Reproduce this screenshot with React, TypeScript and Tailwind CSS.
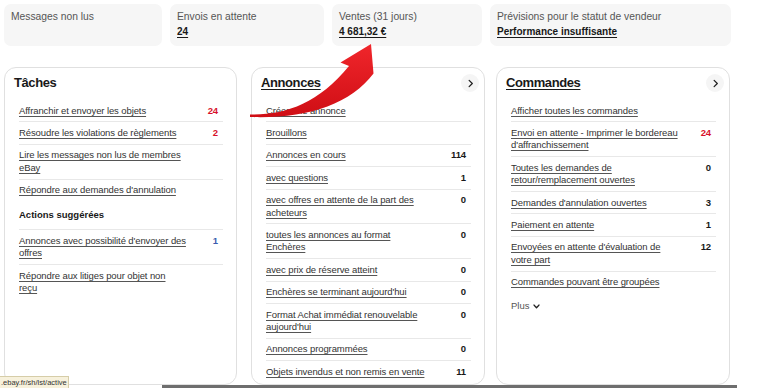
import React from "react";

type Row = { lines: string[]; n?: string; color?: "red" | "blue"; noBorder?: boolean; header?: boolean };

const tasks: Row[] = [
  { lines: ["Affranchir et envoyer les objets"], n: "24", color: "red" },
  { lines: ["Résoudre les violations de règlements"], n: "2", color: "red" },
  { lines: ["Lire les messages non lus de membres", "eBay"] },
  { lines: ["Répondre aux demandes d'annulation"], noBorder: true },
  { lines: ["Actions suggérées"], header: true },
  { lines: ["Annonces avec possibilité d'envoyer des", "offres"], n: "1", color: "blue" },
  { lines: ["Répondre aux litiges pour objet non", "reçu"], noBorder: true },
];

const listings: Row[] = [
  { lines: ["Créer une annonce"] },
  { lines: ["Brouillons"] },
  { lines: ["Annonces en cours"], n: "114" },
  { lines: ["avec questions"], n: "1" },
  { lines: ["avec offres en attente de la part des", "acheteurs"], n: "0" },
  { lines: ["toutes les annonces au format", "Enchères"], n: "0" },
  { lines: ["avec prix de réserve atteint"], n: "0" },
  { lines: ["Enchères se terminant aujourd'hui"], n: "0" },
  { lines: ["Format Achat immédiat renouvelable", "aujourd'hui"], n: "0" },
  { lines: ["Annonces programmées"], n: "0" },
  { lines: ["Objets invendus et non remis en vente"], n: "11", noBorder: true },
];

const orders: Row[] = [
  { lines: ["Afficher toutes les commandes"] },
  { lines: ["Envoi en attente - Imprimer le bordereau", "d'affranchissement"], n: "24", color: "red" },
  { lines: ["Toutes les demandes de", "retour/remplacement ouvertes"], n: "0" },
  { lines: ["Demandes d'annulation ouvertes"], n: "3" },
  { lines: ["Paiement en attente"], n: "1" },
  { lines: ["Envoyées en attente d'évaluation de", "votre part"], n: "12" },
  { lines: ["Commandes pouvant être groupées"], noBorder: true },
];

function Stat({ w, label, value }: { w: string; label: string; value?: string }) {
  return (
    <div className={`${w} h-[42px] shrink-0 rounded-[7px] bg-[#f6f6f6] pl-[7px] pt-[6px]`}>
      <div className="text-[10.3px] leading-[14px] text-[#555]">{label}</div>
      {value && (
        <div className="text-[10px] leading-[15px] font-bold text-[#191919] underline underline-offset-[1.5px]">
          {value}
        </div>
      )}
    </div>
  );
}

function Chevron() {
  return (
    <div className="flex h-[18px] w-[18px] items-center justify-center rounded-full bg-[#f5f5f5]">
      <svg width="9" height="9" viewBox="0 0 10 10" fill="none">
        <path d="M3.5 1.5 L7 5 L3.5 8.5" stroke="#1f1f1f" strokeWidth="1.4" strokeLinecap="round" strokeLinejoin="round" />
      </svg>
    </div>
  );
}

function List({ rows }: { rows: Row[] }) {
  return (
    <div className="ml-[14px] mr-[13px]">
      {rows.map((r, i) =>
        r.header ? (
          <div key={i} className="border-b border-[#e8e8e8] py-[8px] text-[9.5px] leading-[12.4px] font-bold text-[#191919]">
            {r.lines[0]}
          </div>
        ) : (
          <div
            key={i}
            className={`flex justify-between py-[4.5px] text-[9.5px] leading-[12.4px] tracking-[-0.1px] ${
              r.noBorder ? "" : "border-b border-[#e8e8e8]"
            }`}
          >
            <span className="whitespace-nowrap text-[#333] underline underline-offset-[1.5px] decoration-[#555]">
              {r.lines.map((l, j) => (
                <React.Fragment key={j}>
                  {j > 0 && <br />}
                  {l}
                </React.Fragment>
              ))}
            </span>
            {r.n && (
              <span
                className={`pr-[5px] font-bold ${
                  r.color === "red" ? "text-[#d8102a]" : r.color === "blue" ? "text-[#3b5cae]" : "text-[#191919]"
                }`}
              >
                {r.n}
              </span>
            )}
          </div>
        )
      )}
    </div>
  );
}

function Panel({ w, ml, title, link, chevron, rows, children }: { w: string; ml: string; title: string; link?: boolean; chevron?: boolean; rows: Row[]; children?: React.ReactNode }) {
  return (
    <div className={`${w} ${ml} h-full shrink-0 rounded-[12px] border border-[#e0e0e0] bg-white`}>
      <div className="flex h-[32px] items-start justify-between pl-[9px] pr-[5px] pt-[7px]">
        <span
          className={`text-[13px] leading-[15px] font-bold tracking-[-0.4px] text-[#191919] ${
            link ? "underline underline-offset-[2px]" : ""
          }`}
        >
          {title}
        </span>
        {chevron && <div className="-mt-[1px]"><Chevron /></div>}
      </div>
      <List rows={rows} />
      {children}
    </div>
  );
}

export default function App() {
  return (
    <div className="relative h-[388px] w-[760px] overflow-hidden bg-white font-['Liberation_Sans',Arial,sans-serif] text-[#333]">
      <div className="flex gap-2 pl-1 pt-1">
        <Stat w="w-[158px]" label="Messages non lus" />
        <Stat w="w-[154px]" label="Envois en attente" value="24" />
        <Stat w="w-[150px]" label="Ventes (31 jours)" value="4 681,32 €" />
        <Stat w="w-[241px]" label="Prévisions pour le statut de vendeur" value="Performance insuffisante" />
      </div>

      <div className="mt-[21px] flex h-[318px] pl-1">
        <Panel w="w-[233px]" ml="ml-0" title="Tâches" rows={tasks} />
        <Panel w="w-[234px]" ml="ml-[14px]" title="Annonces" link chevron rows={listings} />
        <Panel w="w-[234px]" ml="ml-[11px]" title="Commandes" link chevron rows={orders}>
          <div className="ml-[14px] mt-[7px] flex items-center gap-[4px] text-[9.5px] leading-[12px] text-[#555]">
            Plus
            <svg width="7" height="7" viewBox="0 0 10 10" fill="none">
              <path d="M1.5 3 L5 6.8 L8.5 3" stroke="#222" strokeWidth="2" strokeLinecap="round" strokeLinejoin="round" />
            </svg>
          </div>
        </Panel>
      </div>

      {/* red arrow overlay */}
      <svg className="pointer-events-none absolute inset-0" width="760" height="388" viewBox="0 0 760 388">
        <defs>
          <linearGradient id="ar" x1="0" y1="0" x2="0" y2="1">
            <stop offset="0" stopColor="#f0262b" />
            <stop offset="1" stopColor="#cf0e15" />
          </linearGradient>
        </defs>
        <path
          d="M250 114.5 C285 115 318 104 349 66 L340.5 62.5 L371 44 L373.5 73.5 C350 105 305 119 250 117 Z"
          fill="url(#ar)"
        />
      </svg>

      {/* bottom shadow strip */}
      <div className="absolute bottom-0 left-[162px] h-[3px] w-[575px] bg-[#6e6e6e]" />

      {/* status tooltip */}
      <div className="absolute bottom-0 left-0 h-[12px] w-[69px] border-r border-t border-[#d6cda8] bg-[#f7f1dc] pl-[1px] text-[7.5px] leading-[11px] text-[#333]">
        .ebay.fr/sh/lst/active
      </div>
    </div>
  );
}
